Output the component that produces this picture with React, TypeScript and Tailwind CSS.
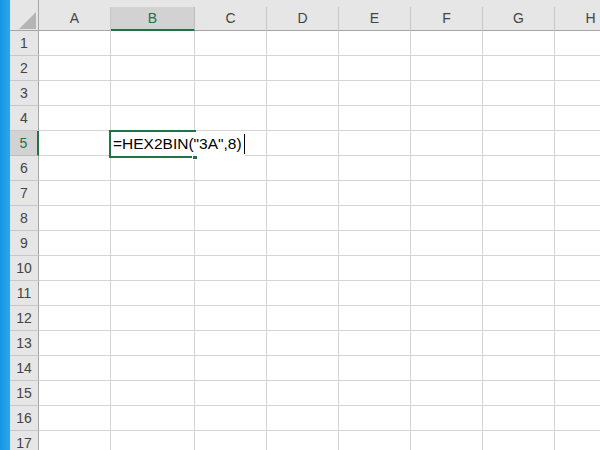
import React from "react";

const cols = [
  { l: "A", w: "w-[72px]" },
  { l: "B", w: "w-[84px]" },
  { l: "C", w: "w-[72px]" },
  { l: "D", w: "w-[72px]" },
  { l: "E", w: "w-[72px]" },
  { l: "F", w: "w-[72px]" },
  { l: "G", w: "w-[72px]" },
  { l: "H", w: "w-[72px]" },
];

const rows = Array.from({ length: 17 }, (_, i) => i + 1);

export default function App() {
  return (
    <div className="relative w-[600px] h-[450px] overflow-hidden flex bg-white font-['Liberation_Sans',Arial,sans-serif]">
      <div className="w-[10px] shrink-0 bg-gradient-to-r from-[#1497e4] to-[#2aa6ee]" />
      <div className="flex flex-col shrink-0">
        {/* header */}
        <div className="flex h-[31px] shrink-0 bg-[#e6e6e6]">
          <div className="relative w-[29px] shrink-0 border-r border-b border-[#a6a6a6]">
            <svg className="absolute left-[9px] top-[12px]" width="17" height="17" viewBox="0 0 17 17">
              <polygon points="17,0 17,17 0,17" fill="#b5b5b5" />
            </svg>
          </div>
          {cols.map((c) => (
            <div key={c.l} className={`${c.w} shrink-0 flex flex-col`}>
              <div className="h-[7px] shrink-0" />
              {c.l === "B" ? (
                <div className="flex-1 flex items-center justify-center bg-[#d2d2d2] border-r border-[#bdbdbd] border-b-2 border-b-[#217346] text-[14px] text-[#217346]">
                  {c.l}
                </div>
              ) : (
                <div className="flex-1 flex items-center justify-center border-r border-[#c8c8c8] border-b border-b-[#a6a6a6] text-[14px] text-[#444444]">
                  {c.l}
                </div>
              )}
            </div>
          ))}
        </div>
        {rows.map((r) => (
          <div key={r} className="flex h-[25px] shrink-0">
            {r === 5 ? (
              <div className="w-[29px] shrink-0 flex items-center justify-center bg-[#d2d2d2] border-r-2 border-r-[#217346] border-b border-b-[#bdbdbd] text-[14px] text-[#217346]">
                {r}
              </div>
            ) : (
              <div className="w-[29px] shrink-0 flex items-center justify-center bg-[#e6e6e6] border-r border-r-[#a6a6a6] border-b border-b-[#c8c8c8] text-[14px] text-[#444444]">
                {r}
              </div>
            )}
            {cols.map((c) => (
              <div key={c.l} className={`${c.w} shrink-0 border-r border-b border-[#d4d4d4]`} />
            ))}
          </div>
        ))}
      </div>
      {/* selection & edit box over B5 */}
      <div className="absolute left-[109px] top-[130px] w-[87px] h-[28px] border-2 border-[#217346]" />
      <div className="absolute left-[111px] top-[132px] w-[134px] h-[24px] bg-white flex items-center">
        <span className="pl-[2px] text-[15.5px] leading-none text-black whitespace-nowrap">=HEX2BIN("3A",8)</span>
        <div className="ml-[2px] w-px h-[20px] bg-black" />
      </div>
      <div className="absolute left-[192px] top-[155px] w-[6px] h-[5px] bg-[#217346] border border-white" />
    </div>
  );
}
